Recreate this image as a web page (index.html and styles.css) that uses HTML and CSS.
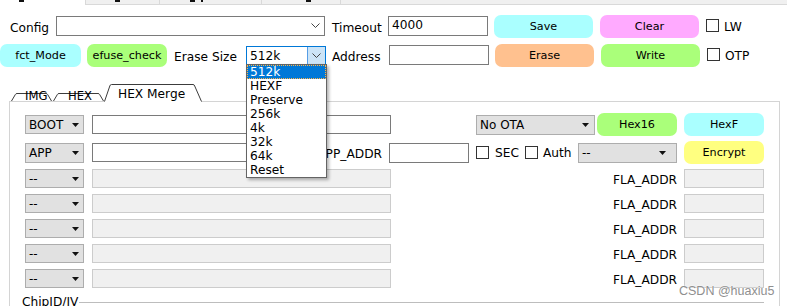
FILE: index.html
```html
<!DOCTYPE html>
<html lang="en">
  <head>
    <meta charset="UTF-8" />
    <title>Flash Tool</title>
    <link rel="stylesheet" href="styles.css">
  </head>
  <body>
    <div class="app">
      <!-- page tabs, cut off at the top edge -->
      <div class="pagetabs">
        <div class="ptab current"><span class="cut c1"></span></div>
        <div class="ptab p2"><span class="cut c2"></span></div>
        <div class="ptab p3"><span class="cut c3"></span><span class="cut tick"></span></div>
        <div class="ptab p4"><span class="cut c4"></span></div>
        <div class="ptab rest"></div>
      </div>

      <div class="bar first">
        <span class="lbl cfg">Config</span>
        <div class="combo cfgbox">
          <span></span>
          <svg class="chev" width="9" height="5"><polyline points="0.5,0.5 4.5,4.5 8.5,0.5" /></svg>
        </div>
        <span class="lbl tmo">Timeout</span>
        <div class="entry top">4000</div>
        <button class="btn cyan gap6">Save</button>
        <button class="btn pink">Clear</button>
        <span class="box"></span>
        <span class="chk">LW</span>
      </div>

      <div class="bar second">
        <button class="btn cyan small">fct_Mode</button>
        <button class="btn green small gap6">efuse_check</button>
        <span class="lbl erase">Erase Size</span>
        <div class="combo focus">
          <span class="val">512k</span>
          <span class="drop"><svg class="chev" width="9" height="5"><polyline points="0.5,0.5 4.5,4.5 8.5,0.5" /></svg></span>
        </div>
        <span class="lbl addr">Address</span>
        <div class="entry top"></div>
        <button class="btn orange gap6">Erase</button>
        <button class="btn green">Write</button>
        <span class="box"></span>
        <span class="chk">OTP</span>
      </div>

      <div class="tabs">
        <div class="tab t-img">
          <svg width="42" height="17"><path d="M0.5 17 L4.3 10.6 Q4.8 9.5 6 9.5 L35 9.5 Q36.2 9.5 36.7 10.6 L40.5 17" /></svg>
          <span>IMG</span>
        </div>
        <div class="tab t-hex">
          <svg width="51" height="17"><path d="M0.5 17 L4.3 10.6 Q4.8 9.5 6 9.5 L45 9.5 Q46.2 9.5 46.7 10.6 L50.5 17" /></svg>
          <span>HEX</span>
        </div>
        <div class="tab t-merge">
          <svg width="98" height="18"><path d="M0.5 17.5 L5.8 2 Q6.2 0.5 7.5 0.5 L89 0.5 Q90.3 0.5 90.7 2 L97.5 17.5" /></svg>
          <span>HEX Merge</span>
        </div>
      </div>

      <div class="panel">
        <div class="prow">
          <div class="pcombo">BOOT<svg class="tri" width="7" height="4"><path d="M0 0 H7 L3.5 4 Z" /></svg></div>
          <div class="entry long"></div>
          <div class="pcombo ota">No OTA<svg class="tri" width="7" height="4"><path d="M0 0 H7 L3.5 4 Z" /></svg></div>
          <button class="btn green narrow hex16">Hex16</button>
          <button class="btn cyan narrow">HexF</button>
        </div>
        <div class="prow">
          <div class="pcombo tall">APP<svg class="tri" width="7" height="4"><path d="M0 0 H7 L3.5 4 Z" /></svg></div>
          <div class="entry mid"></div>
          <span class="lbl appaddr">APP_ADDR</span>
          <div class="entry short"></div>
          <span class="box"></span>
          <span class="chk seclbl">SEC</span>
          <span class="box auth"></span>
          <span class="chk authlbl">Auth</span>
          <div class="pcombo keysel">--<svg class="tri" width="7" height="4"><path d="M0 0 H7 L3.5 4 Z" /></svg></div>
          <button class="btn yellow narrow">Encrypt</button>
        </div>
        <div class="prow slim">
          <div class="pcombo">--<svg class="tri" width="7" height="4"><path d="M0 0 H7 L3.5 4 Z" /></svg></div>
          <div class="entry long off"></div>
          <span class="lbl fla">FLA_ADDR</span>
          <div class="entry addrbox off"></div>
        </div>
        <div class="prow slim">
          <div class="pcombo">--<svg class="tri" width="7" height="4"><path d="M0 0 H7 L3.5 4 Z" /></svg></div>
          <div class="entry long off"></div>
          <span class="lbl fla">FLA_ADDR</span>
          <div class="entry addrbox off"></div>
        </div>
        <div class="prow slim">
          <div class="pcombo">--<svg class="tri" width="7" height="4"><path d="M0 0 H7 L3.5 4 Z" /></svg></div>
          <div class="entry long off"></div>
          <span class="lbl fla">FLA_ADDR</span>
          <div class="entry addrbox off"></div>
        </div>
        <div class="prow slim">
          <div class="pcombo">--<svg class="tri" width="7" height="4"><path d="M0 0 H7 L3.5 4 Z" /></svg></div>
          <div class="entry long off"></div>
          <span class="lbl fla">FLA_ADDR</span>
          <div class="entry addrbox off"></div>
        </div>
        <div class="prow slim">
          <div class="pcombo">--<svg class="tri" width="7" height="4"><path d="M0 0 H7 L3.5 4 Z" /></svg></div>
          <div class="entry long off"></div>
          <span class="lbl fla">FLA_ADDR</span>
          <div class="entry addrbox off"></div>
        </div>
        <div class="group">
          <span>ChipID/IV</span>
          <span class="rule"></span>
        </div>
      </div>

      <!-- open list of the Erase Size combobox -->
      <ul class="droplist">
        <li class="sel">512k</li>
        <li>HEXF</li>
        <li>Preserve</li>
        <li>256k</li>
        <li>4k</li>
        <li>32k</li>
        <li>64k</li>
        <li>Reset</li>
      </ul>

      <div class="watermark">CSDN @huaxiu5</div>
    </div>
  </body>
</html>
```

FILE: styles.css
```css
/* Reset */
html,
body {
  margin: 0;
  padding: 0;
}
* {
  box-sizing: border-box;
}
body {
  font-family: "DejaVu Sans", Verdana, sans-serif;
  font-size: 12.2px;
  color: #000;
  background: #fff;
}
.app {
  position: relative;
  width: 787px;
  height: 306px;
  overflow: hidden;
}

/* Cut-off page tabs */
.pagetabs {
  display: flex;
  height: 5px;
}
.ptab {
  display: flex;
  height: 5px;
  background: #f0f0f0;
  border-left: 1px solid #d9d9d9;
  border-bottom: 1px solid #d9d9d9;
}
.ptab.current {
  width: 85px;
  background: #fff;
  border: none;
}
.ptab.p2 { width: 74px; }
.ptab.p3 { width: 102px; }
.ptab.p4 { width: 79px; }
.ptab.rest { flex: 1; }
.cut {
  width: 5px;
  height: 2px;
  background: #111;
}
.c1 { margin-left: 19px; }
.c2 { margin-left: 29px; }
.c3 { margin-left: 30px; }
.c4 { margin-left: 44px; }
.tick {
  width: 2px;
  margin-left: 6px;
}

/* Toolbar rows */
.bar {
  display: flex;
  align-items: center;
  height: 23px;
}
.bar > *,
.prow > * {
  flex-shrink: 0;
}
.bar.first {
  margin-top: 10px;
  padding-left: 10px;
}
.bar.second {
  margin-top: 6px;
}
.lbl {
  padding-top: 2px;
  white-space: nowrap;
}
.lbl.cfg { width: 46px; }
.lbl.tmo { width: 56px; margin-left: 7px; }
.lbl.erase { width: 72px; margin-left: 7px; }
.lbl.addr { width: 57px; margin-left: 6px; }

.combo {
  display: flex;
  align-items: center;
  justify-content: space-between;
  height: 20px;
  border: 1px solid #7a7a7a;
  background: #fff;
  font-size: 12.2px;
}
.combo.cfgbox {
  width: 269px;
  margin-bottom: 2px;
  padding-right: 4px;
}
.combo.focus {
  width: 80px;
  border-color: #0078d7;
  padding-left: 3px;
}
.combo .drop {
  display: flex;
  align-items: center;
  justify-content: center;
  width: 18px;
  align-self: stretch;
  background: #cce4f7;
  border-left: 1px solid #569de5;
}
.chev {
  fill: none;
  stroke: #444;
  stroke-width: 1;
}

.entry {
  height: 19px;
  border: 1px solid #7a7a7a;
  background: #fff;
  padding: 1px 0 0 3px;
  font-size: 12.2px;
  line-height: 15px;
}
.entry.top {
  width: 100px;
  height: 20px;
  margin-bottom: 1px;
}
.entry.off {
  background: #f0f0f0;
  border-color: #cccccc;
}

.btn {
  height: 23px;
  width: 99px;
  margin-left: 7px;
  padding: 0;
  border: none;
  border-radius: 7px;
  font-family: inherit;
  font-size: 11.2px;
  font-weight: 400;
  color: #000;
}
.btn.gap6 { margin-left: 6px; }
.btn.small { width: 80px; }
.bar.second .btn.small:first-child { width: 81px; margin-left: 0; }
.btn.narrow { width: 80px; }
.btn.hex16 { margin-left: 2px; }
.cyan { background: #aaffff; }
.pink { background: #ffaaff; }
.orange { background: #ffc18f; }
.green { background: #aaff7a; }
.yellow { background: #ffff80; }

.box {
  width: 13px;
  height: 13px;
  margin-left: 7px;
  border: 1px solid #333;
  background: #fff;
}
.bar .box { margin-bottom: 2px; }
.box.auth { margin-left: 0; }
.chk {
  margin-left: 5px;
  white-space: nowrap;
}

/* Notebook tabs */
.tabs {
  display: flex;
  height: 17px;
  margin-top: 17px;
  padding-left: 11px;
}
.tab {
  position: relative;
  height: 17px;
}
.tab svg {
  position: absolute;
  left: 0;
  top: 0;
  fill: #fff;
  stroke: #3c3c3c;
  stroke-width: 1;
}
.tab span {
  position: relative;
  display: block;
  white-space: nowrap;
}
.t-img { width: 42px; }
.t-hex { width: 51px; }
.t-merge { width: 98px; }
.t-img span,
.t-hex span {
  font-size: 11.6px;
  line-height: 11px;
  padding-top: 7px;
}
.t-img span { padding-left: 14px; }
.t-hex span { padding-left: 15px; }
.t-merge span {
  line-height: 14px;
  padding: 3px 0 0 14px;
}
.t-merge::after {
  content: "";
  position: absolute;
  left: 1px;
  right: 1px;
  bottom: -1px;
  height: 1px;
  background: #fff;
}

/* Tab panel */
.panel {
  width: 771px;
  height: 205px;
  margin-left: 9px;
  padding: 11px 15px 0 15px;
  border: 1px solid #d4d4d4;
  border-bottom: none;
}
.prow {
  display: flex;
  align-items: center;
  height: 23px;
}
.prow + .prow { margin-top: 5px; }
.prow.slim { height: 19px; }
.prow.slim + .prow.slim { margin-top: 6px; }

.pcombo {
  display: flex;
  align-items: center;
  justify-content: space-between;
  width: 59px;
  height: 19px;
  padding: 0 4px 0 3px;
  border: 1px solid #adadad;
  background: #e1e1e1;
  font-size: 12px;
}
.pcombo.tall { height: 20px; }
.pcombo.ota {
  width: 119px;
  height: 20px;
  margin-left: 85px;
  padding-right: 5px;
}
.pcombo.keysel {
  width: 99px;
  height: 20px;
  padding-right: 10px;
}
.tri { fill: #111; }

.entry.long { width: 299px; margin-left: 8px; }
.entry.mid { width: 219px; margin-left: 8px; }
.entry.short { width: 80px; height: 20px; margin-left: 7px; }
.entry.addrbox { width: 80px; margin-left: 7px; }

.lbl.appaddr {
  width: 71px;
  text-align: right;
}
.lbl.fla {
  flex: 1;
  flex-shrink: 1;
  text-align: right;
}
.chk.seclbl { width: 30px; margin-left: 6px; }
.chk.authlbl { width: 35px; margin-left: 5px; }

.group {
  display: flex;
  align-items: center;
  margin-top: 7px;
  margin-left: -3px;
}
.group .rule {
  flex: 1;
  height: 1px;
  margin-left: 1px;
  background: #bdbdbd;
}

/* Open dropdown list */
.droplist {
  position: absolute;
  left: 246px;
  top: 64px;
  width: 81px;
  margin: 0;
  padding: 0;
  list-style: none;
  border: 1px solid #646464;
  background: #fff;
  box-shadow: 2px 2px 3px rgba(0, 0, 0, 0.3);
}
.droplist li {
  height: 14px;
  line-height: 14px;
  padding-left: 3px;
  font-size: 12.2px;
}
.droplist li.sel {
  background: #0078d7;
  color: #fff;
  outline: 1px dotted #ffb347;
  outline-offset: -1px;
}

.watermark {
  position: absolute;
  left: 679px;
  top: 284px;
  font-family: "Liberation Sans", Arial, sans-serif;
  font-size: 12.5px;
  color: #8f8f8f;
  text-shadow: 0 0 1px #fff, 0 0 2px #fff;
}
```
